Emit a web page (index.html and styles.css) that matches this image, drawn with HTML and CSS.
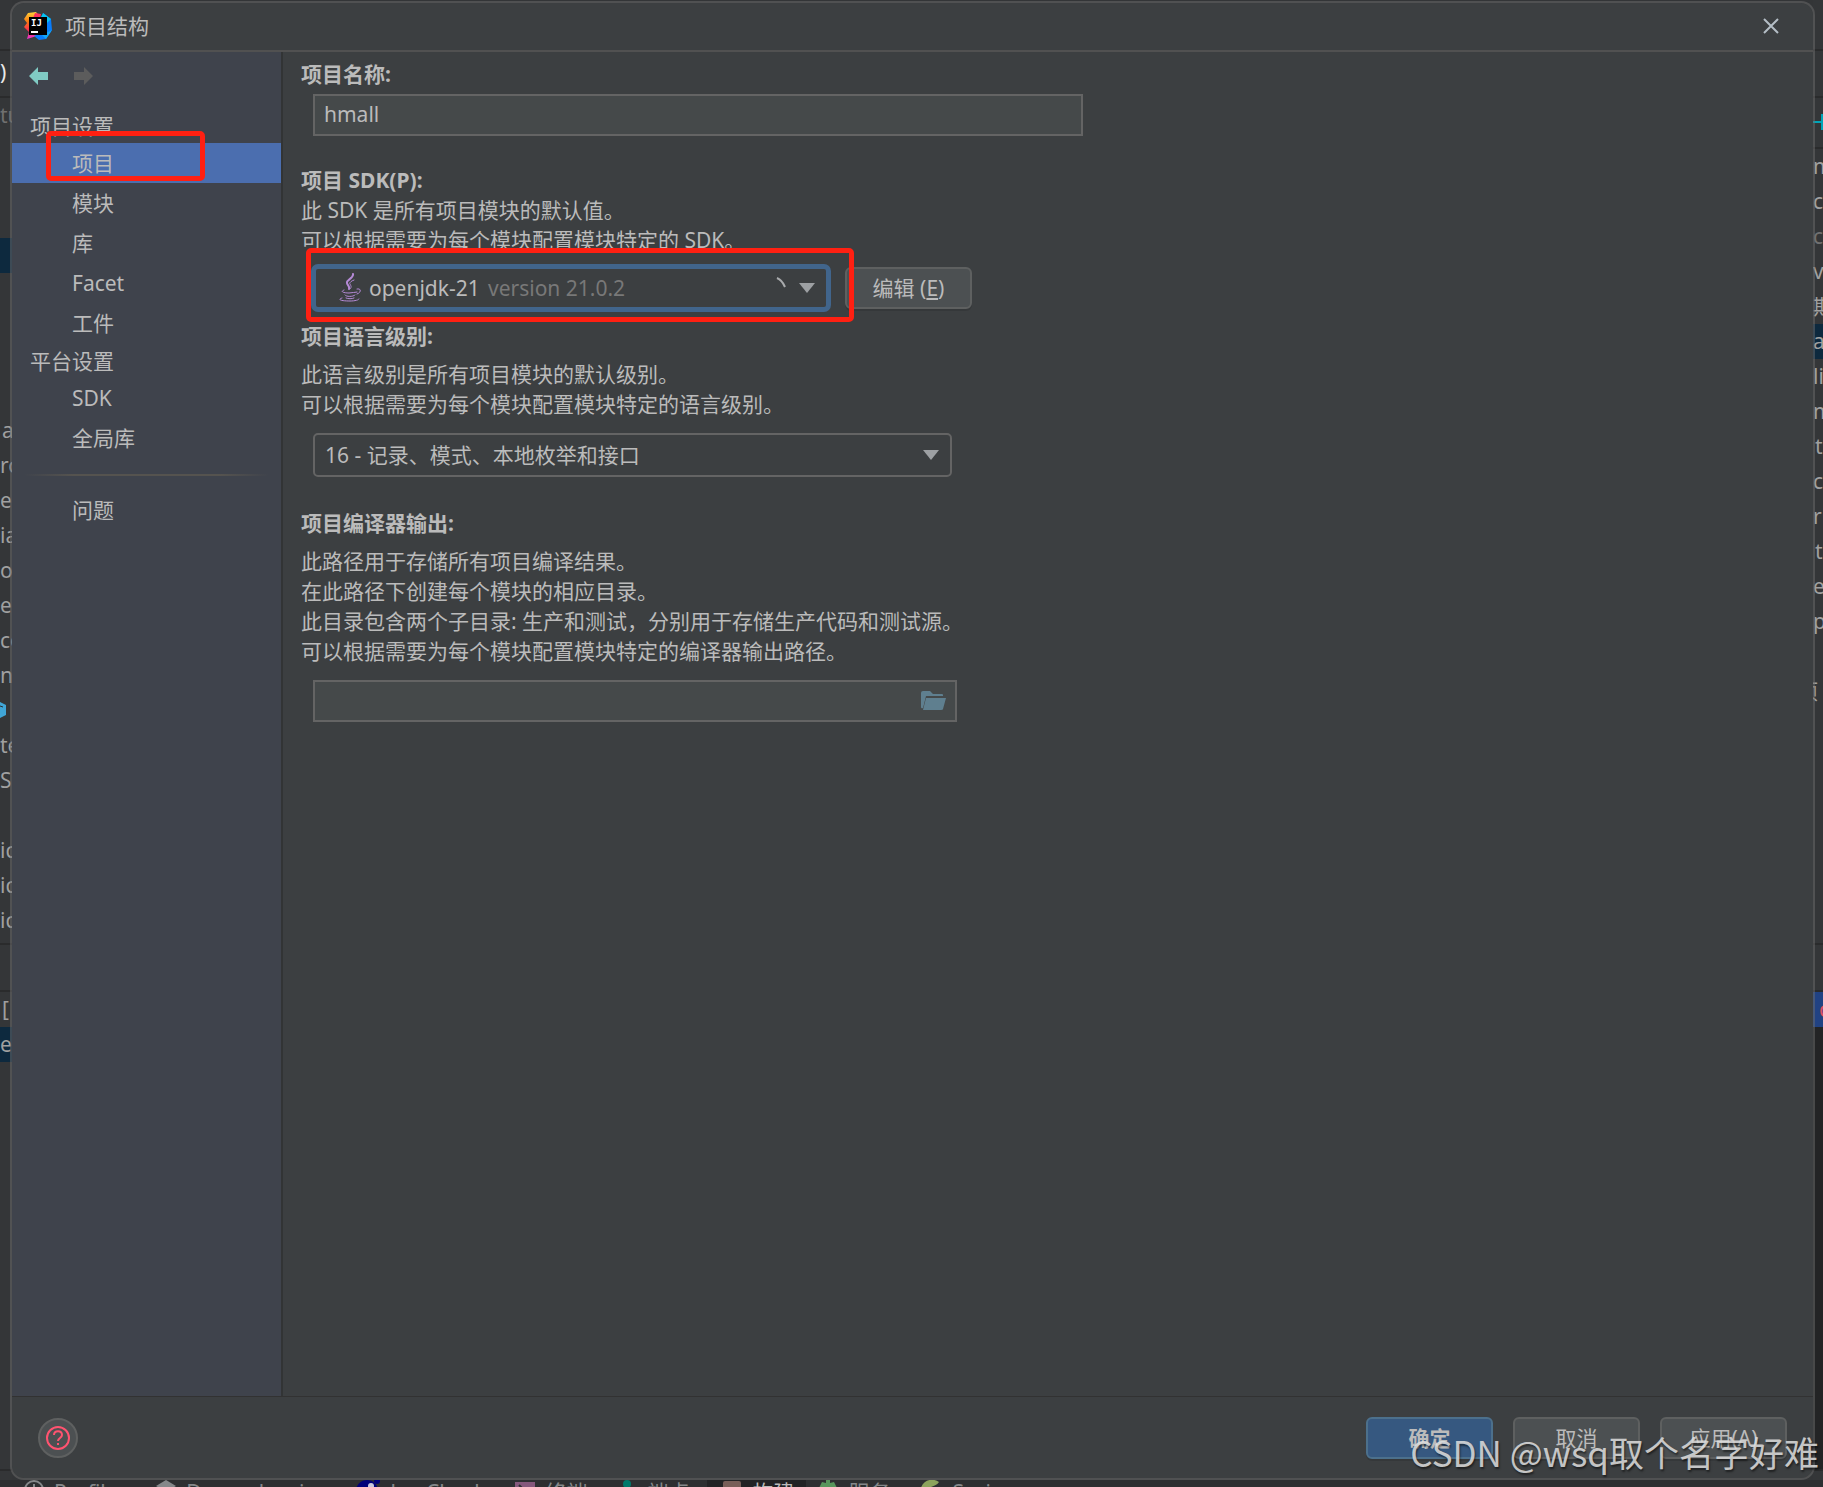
FILE: index.html
```html
<!DOCTYPE html>
<html lang="zh-CN">
<head>
  <meta charset="UTF-8">
  <meta name="viewport" content="width=device-width, initial-scale=1.0">
  <title>项目结构</title>
  <link rel="stylesheet" href="styles.css">
</head>
<body>
  <div class="workspace">

    <!-- editor behind, left edge -->
    <div class="edge edge-left">
      <div class="edge-top"></div>
      <div class="edge-bar edge-bright">)</div>
      <div class="edge-row edge-dim">tu</div>
      <div class="edge-row"></div>
      <div class="edge-row"></div>
      <div class="edge-row"></div>
      <div class="edge-row edge-selected"></div>
      <div class="edge-row"></div>
      <div class="edge-row"></div>
      <div class="edge-row"></div>
      <div class="edge-row"></div>
      <div class="edge-row edge-indent">a</div>
      <div class="edge-row">rc</div>
      <div class="edge-row">er</div>
      <div class="edge-row">ia</div>
      <div class="edge-row">oc</div>
      <div class="edge-row">er</div>
      <div class="edge-row">co</div>
      <div class="edge-row">np</div>
      <div class="edge-row">
        <svg width="6" height="18" viewBox="0 0 6 18"><path d="M0 1l6 3v10l-6 3z" fill="#40a5d6"/><path d="M0 5l3 1" stroke="#2b2b2b"/></svg>
      </div>
      <div class="edge-row">te</div>
      <div class="edge-row">Sc</div>
      <div class="edge-row"></div>
      <div class="edge-row">ic</div>
      <div class="edge-row">ic</div>
      <div class="edge-row">ic</div>
      <div class="edge-gap"></div>
      <div class="edge-bar"></div>
      <div class="edge-row edge-indent">[</div>
      <div class="edge-row edge-selected">e</div>
      <div class="edge-fill"></div>
    </div>

    <div class="dialog">
      <div class="title-bar">
        <svg class="logo" width="28" height="28" viewBox="0 0 28 28">
          <defs>
            <linearGradient id="warm" x1="0" y1="0" x2="0" y2="1">
              <stop offset="0" stop-color="#fdd23b"/>
              <stop offset=".35" stop-color="#f97a12"/>
              <stop offset=".7" stop-color="#fe2857"/>
              <stop offset="1" stop-color="#e63ad8"/>
            </linearGradient>
          </defs>
          <path d="M4 1l8-1 4 5v18L3 27l2-7-5-5 3-4-3-4z" fill="url(#warm)"/>
          <path d="M11 1l6 1-1 5-7-1z" fill="#fe315d"/>
          <path d="M19 1l8 6 1 11-6 9-7 1-5-4 9-4z" fill="#087cfa"/>
          <path d="M19 1l8 6-4 4-7-4z" fill="#07c3f2"/>
          <path d="M28 18l-6 9-4-4z" fill="#13a6f5"/>
          <rect x="5" y="5" width="18" height="18" fill="#000"/>
          <text x="7" y="14" class="logo-text">IJ</text>
          <rect x="7" y="19" width="7" height="2" fill="#fff"/>
        </svg>
        <span class="title">项目结构</span>
        <button class="close" aria-label="关闭">
          <svg width="16" height="16" viewBox="0 0 16 16"><path d="M1 1l14 14M15 1L1 15" stroke="#b4bec6" stroke-width="2"/></svg>
        </button>
      </div>

      <div class="content">
        <nav class="sidebar">
          <div class="history">
            <button aria-label="后退">
              <svg width="19" height="18" viewBox="0 0 19 18"><path d="M0 9l9-9v5h10v8H9v5z" fill="#80cbc4"/></svg>
            </button>
            <button aria-label="前进">
              <svg width="19" height="18" viewBox="0 0 19 18"><path d="M19 9l-9-9v5H0v8h10v5z" fill="#5c5c5c"/></svg>
            </button>
          </div>
          <div class="group">项目设置</div>
          <a href="#" class="item active">项目<span class="mark mark-item"></span></a>
          <a href="#" class="item">模块</a>
          <a href="#" class="item">库</a>
          <a href="#" class="item">Facet</a>
          <a href="#" class="item">工件</a>
          <div class="group">平台设置</div>
          <a href="#" class="item">SDK</a>
          <a href="#" class="item">全局库</a>
          <div class="separator"></div>
          <a href="#" class="item">问题</a>
        </nav>

        <main class="main">
          <section>
            <label class="heading" for="name">项目名称:</label>
            <input class="field name" id="name" type="text" value="hmall">
          </section>

          <section>
            <label class="heading" for="sdk">项目 SDK(P):</label>
            <p>此 SDK 是所有项目模块的默认值。<br>可以根据需要为每个模块配置模块特定的 SDK。</p>
            <div class="sdk-row">
              <div class="sdk-combo">
                <svg width="22" height="30" viewBox="0 0 22 30" fill="none" stroke="#b58ad6" stroke-linecap="round">
                  <path d="M14 1c1 4-7 6-6 9 0 2 3 3 2 6" stroke-width="2"/>
                  <path d="M15 7c-3 1-5 3-4 4 1 2 2 3 0 5"/>
                  <path d="M5 17c-5 2 1 3 5 3 3 0 6-1 8-1"/>
                  <path d="M18 16c5-1 4 4 0 5"/>
                  <path d="M6 22c1 2 8 2 10 0M7 25c2 1 6 1 8 0"/>
                  <path d="M3 25c-6 2 1 3 8 3 5 0 9-1 9-2"/>
                </svg>
                <select id="sdk"><option>openjdk-21</option></select>
                <span class="version">version 21.0.2</span>
                <svg class="spinner" width="12" height="14" viewBox="0 0 12 14"><path d="M2 2q5 2 8 9" fill="none" stroke="#a9abad" stroke-width="2"/></svg>
                <svg width="16" height="10" viewBox="0 0 16 10"><path d="M0 0h16L8 10z" fill="#9da0a3"/></svg>
              </div>
              <button class="btn edit">编辑 (<u>E</u>)</button>
              <span class="mark mark-sdk"></span>
            </div>
          </section>

          <section>
            <label class="heading spaced" for="level">项目语言级别:</label>
            <p>此语言级别是所有项目模块的默认级别。<br>可以根据需要为每个模块配置模块特定的语言级别。</p>
            <div class="level-combo">
              <select id="level"><option>16 - 记录、模式、本地枚举和接口</option></select>
              <svg width="16" height="10" viewBox="0 0 16 10"><path d="M0 0h16L8 10z" fill="#9da0a3"/></svg>
            </div>
          </section>

          <section>
            <label class="heading spaced" for="output">项目编译器输出:</label>
            <p>此路径用于存储所有项目编译结果。<br>在此路径下创建每个模块的相应目录。<br>此目录包含两个子目录: 生产和测试，分别用于存储生产代码和测试源。<br>可以根据需要为每个模块配置模块特定的编译器输出路径。</p>
            <div class="field output">
              <input id="output" type="text">
              <button aria-label="浏览">
                <svg width="25" height="19" viewBox="0 0 25 19" fill="#5f7f8f"><path d="M2 0h7l3 3h9q1 0 1 1v1H5L2 17Q0 18 0 16V2Q0 0 2 0z"/><path d="M5 7h20l-3 11q0 1-2 1H2z"/></svg>
              </button>
            </div>
          </section>
        </main>
      </div>

      <div class="buttons">
        <button class="help" aria-label="帮助">
          <svg width="24" height="24" viewBox="0 0 24 24" fill="none" stroke="#ff5370" stroke-width="2">
            <circle cx="12" cy="12" r="11"/>
            <path d="M8 9c0-5 8-5 8 0 0 3-4 3-4 6"/>
            <path d="M12 17v2"/>
          </svg>
        </button>
        <button class="btn primary">确定</button>
        <button class="btn">取消</button>
        <button class="btn">应用(A)</button>
      </div>
    </div>

    <!-- editor behind, right edge -->
    <div class="edge edge-right">
      <div class="edge-top"></div>
      <div class="edge-bar"></div>
      <div class="edge-tool">
        <svg width="10" height="16" viewBox="0 0 10 16"><path d="M0 8h10M9 0v16" stroke="#00a5b8" stroke-width="2"/></svg>
      </div>
      <div class="edge-row">m</div>
      <div class="edge-row">c</div>
      <div class="edge-row edge-dim">c</div>
      <div class="edge-row">vi</div>
      <div class="edge-row">期</div>
      <div class="edge-row edge-selected">a</div>
      <div class="edge-row">li</div>
      <div class="edge-row">m</div>
      <div class="edge-row edge-indent">t</div>
      <div class="edge-row">c</div>
      <div class="edge-row">ri</div>
      <div class="edge-row edge-indent">t</div>
      <div class="edge-row">e</div>
      <div class="edge-row">p</div>
      <div class="edge-row"></div>
      <div class="edge-row edge-tail">项</div>
      <div class="edge-blank"></div>
      <div class="edge-bar"></div>
      <div class="edge-row edge-error">c</div>
      <div class="edge-fill edge-console"></div>
    </div>

    <!-- tool window bar -->
    <div class="tool-bar">
      <span class="tool"><svg width="20" height="20" viewBox="0 0 20 20"><circle cx="10" cy="10" r="9" fill="none" stroke="#85888a" stroke-width="2"/><path d="M10 4v7" stroke="#85888a" stroke-width="2"/></svg>Profiler</span>
      <span class="tool"><svg width="20" height="20" viewBox="0 0 20 20"><path d="M10 0l10 6-10 6L0 6z" fill="#85888a"/></svg>Dependencies</span>
      <span class="tool"><svg width="24" height="20" viewBox="0 0 24 20"><circle cx="11" cy="11" r="11" fill="#00007a"/><circle cx="21" cy="1" r="3" fill="#00007a"/><circle cx="15" cy="6" r="3" fill="#c8c8dc"/></svg>LuaCheck</span>
      <span class="tool"><svg width="20" height="20" viewBox="0 0 20 20"><rect y="2" width="20" height="18" fill="#85587c"/><path d="M4 5l5 5-5 5" fill="none" stroke="#2d2f31" stroke-width="2"/></svg>终端</span>
      <span class="tool"><svg width="20" height="20" viewBox="0 0 20 20"><circle cx="10" cy="4" r="4" fill="#00796b"/></svg>端点</span>
      <span class="tool tool-active"><svg width="20" height="20" viewBox="0 0 20 20"><rect x="1" y="1" width="18" height="16" rx="2" fill="#795f59"/></svg>构建</span>
      <span class="tool"><svg width="20" height="20" viewBox="0 0 20 20"><path d="M8 0h4v3l4-1 2 4 2 4H0l2-4 2-4 4 1z" fill="#57965c"/></svg>服务</span>
      <span class="tool"><svg width="22" height="20" viewBox="0 0 22 20"><path d="M0 14C0 0 12-3 19 2c-3 5-11 4-19 12z" fill="#8ca35c"/></svg>Spring</span>
    </div>
  </div>

  <div class="watermark">CSDN @wsq取个名字好难</div>
</body>
</html>
```
FILE: styles.css
```css
* {
  box-sizing: border-box;
}

body {
  margin: 0;
  background: #333537;
  color: #bbbbbb;
  font-family: "Noto Sans", "Noto Sans CJK SC", sans-serif;
  font-size: 21px;
  line-height: 30px;
}

button,
input,
select {
  margin: 0;
  padding: 0;
  border: none;
  background: none;
  color: inherit;
  font: inherit;
  outline: none;
}

select {
  appearance: none;
}

svg {
  flex: none;
  display: block;
}

.workspace {
  display: grid;
  grid-template-columns: 12px minmax(0, 1fr) 10px;
  grid-template-rows: minmax(0, 1fr) 7px;
  height: 100vh;
  overflow: hidden;
}

/* strips of the editor that stay visible around the dialog */
.edge {
  display: flex;
  flex-direction: column;
  overflow: hidden;
  white-space: nowrap;
  background: #343638;
}

.edge-top,
.edge-bar,
.edge-tool,
.edge-blank,
.edge-gap {
  flex: none;
  border-bottom: 2px solid #2a2b2c;
}

.edge-top {
  height: 51px;
}

.edge-bar {
  height: 47px;
  line-height: 42px;
}

.edge-tool {
  height: 51px;
  padding-top: 16px;
}

.edge-gap {
  height: 7px;
}

.edge-blank {
  height: 236px;
}

.edge-row {
  flex: none;
  height: 35px;
  line-height: 34px;
  color: #a0a0a0;
}

.edge-row svg {
  margin-top: 8px;
}

.edge-indent {
  padding-left: 2px;
}

.edge-bright {
  color: #e8e8e8;
}

.edge-row.edge-dim {
  color: #707070;
}

.edge-selected {
  background: #0d293e;
}

.edge-row.edge-error {
  background: #214283;
  color: #e05060;
  padding-left: 6px;
}

.edge-tail {
  direction: rtl;
  padding-right: 5px;
}

.edge-fill {
  flex: 1;
  border-bottom: 2px solid #2a2b2c;
  margin-bottom: 9px;
}

.edge-console {
  background: #232425;
}

/* dialog, its translucent border lies over the strips */
.dialog {
  display: flex;
  flex-direction: column;
  z-index: 1;
  margin: 1px -2px 0;
  border: 2px solid rgba(110, 110, 110, 0.5);
  border-radius: 14px;
  background: #3c3f41;
  background-clip: padding-box;
  overflow: hidden;
}

.title-bar {
  display: flex;
  align-items: center;
  height: 49px;
  padding: 0 34px 2px 12px;
  border-bottom: 2px solid #515151;
}

.logo-text {
  font: bold 9px "DejaVu Sans Mono", monospace;
  fill: #ffffff;
}

.title {
  flex: 1;
  margin-left: 13px;
}

.content {
  flex: 1;
  display: flex;
  min-height: 0;
}

.sidebar {
  width: 271px;
  border-right: 2px solid #323435;
  background: #3f434c;
}

.history {
  display: flex;
  align-items: center;
  gap: 26px;
  height: 56px;
  padding: 0 17px 8px;
}

.group {
  height: 35px;
  padding-left: 18px;
  line-height: 37px;
}

.item {
  display: block;
  position: relative;
  height: 40px;
  padding-left: 60px;
  line-height: 40px;
  color: inherit;
  text-decoration: none;
}

.item.active {
  background: #4b6eaf;
}

.separator {
  height: 2px;
  margin: 16px 12px 14px;
  background: linear-gradient(to right, transparent, #55534f 20%, #55534f 80%, transparent);
}

.main {
  flex: 1;
  padding: 7px 18px;
}

.heading {
  display: block;
  font-weight: bold;
}

.heading.spaced {
  margin-bottom: 8px;
}

p {
  margin: 0;
}

.field {
  height: 42px;
  margin: 5px 12px 29px;
  padding: 0 9px 2px;
  border: 2px solid #646464;
  background: #45494a;
}

.name {
  display: block;
  width: 770px;
}

.sdk-row {
  position: relative;
  display: flex;
  align-items: center;
  gap: 14px;
  margin: 9px 10px;
}

.sdk-combo {
  display: flex;
  align-items: center;
  gap: 8px;
  width: 520px;
  height: 48px;
  padding: 0 11px 0 23px;
  border: 5px solid #41658c;
  border-radius: 7px;
}

.sdk-combo .version {
  color: #787878;
}

.sdk-combo .spinner {
  margin: 0 4px 10px auto;
}

.level-combo {
  display: flex;
  align-items: center;
  width: 639px;
  height: 44px;
  margin: 14px 12px 31px;
  padding: 0 11px 0 10px;
  border: 2px solid #646464;
  border-radius: 5px;
}

.level-combo select {
  flex: 1;
}

.output {
  display: flex;
  align-items: center;
  width: 644px;
  margin-top: 14px;
}

.output input {
  flex: 1;
}

.btn {
  width: 127px;
  height: 42px;
  border: 2px solid #5e6060;
  border-radius: 6px;
  background: #4c5052;
  box-shadow: 0 2px 0 rgba(0, 0, 0, 0.1);
}

.btn.primary {
  border-color: #4c708c;
  background: #365880;
  font-weight: bold;
}

.buttons {
  display: flex;
  align-items: center;
  gap: 20px;
  height: 82px;
  padding: 0 26px;
  border-top: 1px solid #323232;
}

.help {
  display: flex;
  align-items: center;
  justify-content: center;
  width: 40px;
  height: 40px;
  margin-right: auto;
  border: 2px solid #5e6060;
  border-radius: 50%;
  background: #4c5052;
}

/* red highlight frames */
.mark {
  position: absolute;
  border: 5px solid #ff2012;
  border-radius: 5px;
  pointer-events: none;
}

.mark-item {
  top: -12px;
  left: 34px;
  width: 159px;
  height: 50px;
}

.mark-sdk {
  top: -16px;
  left: -5px;
  width: 548px;
  height: 74px;
}

/* bottom strip */
.tool-bar {
  grid-column: 1 / -1;
  display: flex;
  align-items: flex-start;
  padding-left: 12px;
  overflow: hidden;
  background: #2d2f31;
  color: #85888a;
}

.tool {
  flex: none;
  display: flex;
  gap: 10px;
  padding: 0 18px 0 12px;
  line-height: 24px;
}

.tool-active {
  padding: 0 12px 0 15px;
  background: #222325;
  color: #bbbbbb;
}

.watermark {
  position: absolute;
  z-index: 2;
  right: 4px;
  bottom: 14px;
  color: rgba(225, 225, 225, 0.85);
  font-family: "Noto Sans CJK SC", sans-serif;
  font-size: 35px;
  line-height: 42px;
  white-space: nowrap;
  text-shadow: 1px 2px 2px rgba(0, 0, 0, 0.5);
  pointer-events: none;
}
```
